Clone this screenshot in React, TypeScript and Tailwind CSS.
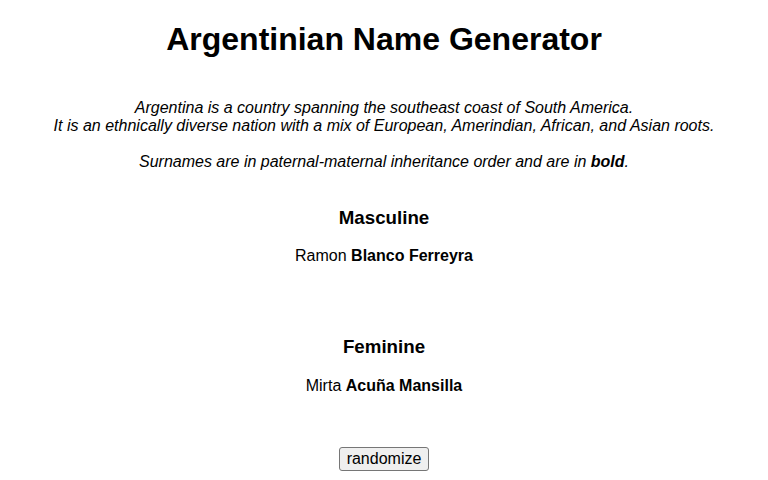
import { useState } from "react";

type Person = { given: string; paternal: string; maternal: string };

const masculine: Person[] = [
  { given: "Ramon", paternal: "Blanco", maternal: "Ferreyra" },
  { given: "Julio", paternal: "Sosa", maternal: "Gimenez" },
  { given: "Hector", paternal: "Romero", maternal: "Benitez" },
];

const feminine: Person[] = [
  { given: "Mirta", paternal: "Acuña", maternal: "Mansilla" },
  { given: "Graciela", paternal: "Medina", maternal: "Quiroga" },
  { given: "Silvia", paternal: "Herrera", maternal: "Ledesma" },
];

function NameLine({ person, className }: { person: Person; className: string }) {
  return (
    <p className={`text-base leading-[18px] ${className}`}>
      {person.given} <b>{person.paternal} {person.maternal}</b>
    </p>
  );
}

export default function App() {
  const [index, setIndex] = useState({ m: 0, f: 0 });

  const randomize = () => {
    setIndex({
      m: Math.floor(Math.random() * masculine.length),
      f: Math.floor(Math.random() * feminine.length),
    });
  };

  return (
    <div className="flex min-h-[480px] flex-col items-center bg-white text-center font-['Liberation_Sans',Arial,sans-serif] text-black">
      <h1 className="mt-[21px] text-[32px] font-bold leading-[37px]">Argentinian Name Generator</h1>

      <p className="mt-[41px] text-base italic leading-[18px]">
        Argentina is a country spanning the southeast coast of South America.
        <br />
        It is an ethnically diverse nation with a mix of European, Amerindian, African, and Asian roots.
        <br />
        <br />
        Surnames are in paternal-maternal inheritance order and are in <b>bold</b>.
      </p>

      <h3 className="mt-[36px] text-[18.72px] font-bold leading-[22px]">Masculine</h3>
      <NameLine person={masculine[index.m]} className="mt-[18px]" />

      <h3 className="mt-[71px] text-[18.72px] font-bold leading-[22px]">Feminine</h3>
      <NameLine person={feminine[index.f]} className="mt-[19px]" />

      <button
        onClick={randomize}
        className="mt-[52px] rounded-[3px] border border-[#767676] bg-[#efefef] px-[7px] py-px text-base leading-[20px] hover:bg-[#e5e5e5]"
      >
        randomize
      </button>
    </div>
  );
}
